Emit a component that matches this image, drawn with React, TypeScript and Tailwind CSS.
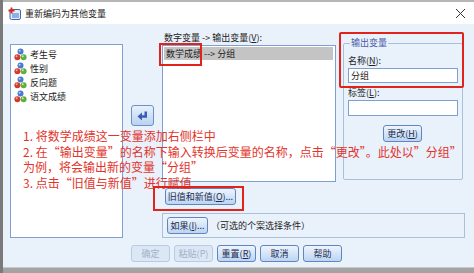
import React from "react";

const font = { fontFamily: '"Noto Sans CJK SC", "Noto Sans", sans-serif' };

function Balls() {
  return (
    <svg width="13" height="13" viewBox="0 0 13 13" className="shrink-0">
      <circle cx="6.5" cy="3.6" r="3" fill="#4a78d0" />
      <circle cx="3.4" cy="9.2" r="3" fill="#d23a2e" />
      <circle cx="9.6" cy="9.2" r="3" fill="#5fae3e" />
      <circle cx="5.6" cy="2.7" r="1" fill="#b8d0f5" />
      <circle cx="2.6" cy="8.3" r="1" fill="#f2a79e" />
      <circle cx="8.8" cy="8.3" r="1" fill="#c5e8b0" />
    </svg>
  );
}

function Btn({ children, w, disabled }: { children: React.ReactNode; w: string; disabled?: boolean }) {
  return (
    <div
      className={
        disabled
          ? `${w} h-[17px] shrink-0 whitespace-nowrap rounded-[3px] border border-[#b7cbe5] bg-[#dbe7f5] text-[#a1b1c6] text-[9px] leading-none flex items-center justify-center`
          : `${w} h-[17px] shrink-0 whitespace-nowrap rounded-[3px] border border-[#5f86c0] bg-linear-to-b from-[#eef5fd] to-[#bcd5f2] text-[#1d2b4d] text-[9px] leading-none flex items-center justify-center`
      }
    >
      {children}
    </div>
  );
}

const U = ({ c }: { c: string }) => <span className="underline">{c}</span>;

export default function App() {
  return (
    <div className="w-[474px] h-[273px] relative overflow-hidden flex bg-[#e9f1fb] text-[#222]" style={font}>
      <div className="w-[3px] h-full bg-[#7a7a7a]" />
      <div className="flex-1 flex flex-col">
        {/* title bar */}
        <div className="h-[24px] bg-white border-t-2 border-[#b5b5b5] flex items-center pl-[5px] pr-[8px]">
          <svg width="13" height="13" viewBox="0 0 13 13" className="shrink-0">
            <rect x="2" y="2.5" width="10.5" height="10" rx="1.5" fill="#e6eef9" stroke="#3d66b3" strokeWidth="1" />
            <rect x="4" y="6" width="7" height="5" fill="#8fb0e0" />
            <path d="M3.5 0.5 v6 M0.5 3.5 h6" stroke="#d8261c" strokeWidth="1.8" />
          </svg>
          <span className="ml-[4px] text-[9px] leading-none text-[#222]">重新编码为其他变量</span>
          <div className="flex-1" />
          <svg width="11" height="11" viewBox="0 0 11 11">
            <path d="M1 1 L10 10 M10 1 L1 10" stroke="#333" strokeWidth="1" />
          </svg>
        </div>

        {/* body */}
        <div className="flex-1 flex flex-col">
          <div className="flex items-start">
            {/* left list */}
            <div className="ml-[7px] mt-[20px] w-[113px] h-[194px] bg-white border border-[#7e9fd2] pt-[2px] pl-[3px] flex flex-col">
              {["考生号", "性别", "反向题", "语文成绩"].map((t) => (
                <div key={t} className="h-[14px] flex items-center gap-[3px] text-[9px] leading-none">
                  <Balls />
                  <span>{t}</span>
                </div>
              ))}
            </div>

            {/* arrow button */}
            <div className="ml-[8px] mt-[81px] w-[23px] h-[21px] rounded-[3px] border border-[#6d90c8] bg-linear-to-b from-[#e8f1fc] to-[#b9d2f0] flex items-center justify-center">
              <svg width="11" height="10" viewBox="0 0 11 10">
                <path d="M7.5 0.5 h2.5 v6.3 h-5 v2.7 l-4.5 -4 l4.5 -4 v2.7 h2.5 z" fill="#3a5db3" />
              </svg>
            </div>

            {/* right block */}
            <div className="ml-[8px] w-[303px] flex flex-col">
              <div className="flex items-start">
                {/* middle column */}
                <div className="w-[174px] mt-[7px] flex flex-col">
                  <div className="h-[14px] pl-[2px] text-[9px] leading-[14px] whitespace-nowrap">
                    数字变量 -&gt; 输出变量(<U c="V" />):
                  </div>
                  <div className="h-[137px] bg-white border border-[#7e9fd2] p-[1px]">
                    <div className="h-[13px] mr-[1px] bg-[#c4c4c4] pl-[2px] text-[9px] leading-[13px] whitespace-nowrap">
                      数学成绩 --&gt; 分组
                    </div>
                  </div>
                </div>

                {/* output variable group */}
                <fieldset className="ml-[7px] mt-[12px] w-[120px] h-[144px] border border-[#a9bfdc] rounded-[2px] px-[4px] flex flex-col">
                  <legend className="ml-[2px] px-[1px] text-[9px] leading-[14px] text-[#4a5aa8]">输出变量</legend>
                  <div className="mt-[4px] text-[9px] leading-[14px]">
                    名称(<U c="N" />):
                  </div>
                  <div className="w-[110px] h-[15px] bg-white border border-[#7e9fd2] text-[9px] leading-[13px] pl-[2px]">分组</div>
                  <div className="mt-[3px] text-[9px] leading-[14px]">
                    标签(<U c="L" />):
                  </div>
                  <div className="w-[110px] h-[16px] bg-white border border-[#7e9fd2]" />
                  <div className="mt-[9px] flex justify-center pr-[1px]">
                    <Btn w="w-[39px]">
                      更改(<U c="H" />)
                    </Btn>
                  </div>
                </fieldset>
              </div>

              {/* old & new values */}
              <div className="mt-[6px] ml-[3px]">
                <Btn w="w-[71px]">
                  旧值和新值(<U c="O" />)...
                </Btn>
              </div>

              {/* if group */}
              <div className="mt-[8px] h-[25px] border border-[#a9bfdc] flex items-center pl-[4px]">
                <Btn w="w-[41px]">
                  如果(<U c="I" />)...
                </Btn>
                <span className="ml-[3px] text-[9px] leading-none whitespace-nowrap">（可选的个案选择条件）</span>
              </div>
            </div>
          </div>

          {/* bottom buttons */}
          <div className="mt-[7px] ml-[128px] flex gap-[4px]">
            <Btn w="w-[39px]" disabled>
              确定
            </Btn>
            <Btn w="w-[39px]" disabled>
              粘贴(P)
            </Btn>
            <Btn w="w-[39px]">
              重置(<U c="R" />)
            </Btn>
            <Btn w="w-[39px]">取消</Btn>
            <Btn w="w-[39px]">帮助</Btn>
          </div>
        </div>

        <div className="h-[6px] bg-[#a3a3a3] border-t border-[#c9c9c9]" />
      </div>

      {/* annotation overlay */}
      <div className="absolute left-[23px] top-[128px] text-[12px] leading-[15.5px] text-[#e3342b] whitespace-nowrap">
        <div>1. 将数学成绩这一变量添加右侧栏中</div>
        <div>2. 在“输出变量”的名称下输入转换后变量的名称，点击“更改”。此处以”分组”</div>
        <div>为例，将会输出新的变量“分组”</div>
        <div>3. 点击“旧值与新值”进行赋值</div>
      </div>

      {/* red highlight boxes */}
      <div className="absolute left-[159px] top-[43px] w-[43px] h-[23px] border-2 border-[#e0231b]" />
      <div className="absolute left-[339px] top-[32px] w-[125px] h-[56px] border-2 border-[#e0231b] rounded-[2px]" />
      <div className="absolute left-[153px] top-[186px] w-[91px] h-[25px] border-2 border-[#e0231b]" />
    </div>
  );
}
